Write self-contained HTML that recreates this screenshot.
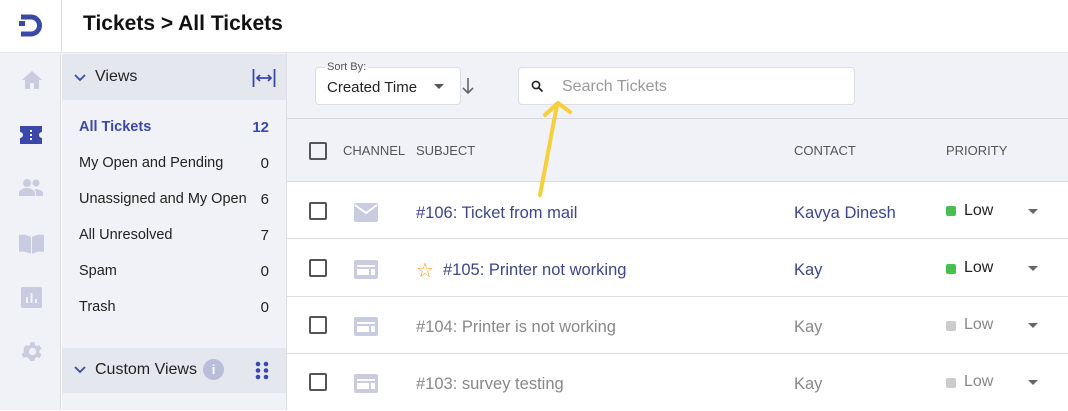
<!DOCTYPE html><html><head><style>
*{box-sizing:border-box;margin:0;padding:0}
body{width:1068px;height:410px;overflow:hidden;font-family:"Liberation Sans",sans-serif;background:#fff;position:relative;color:#222}
.a{position:absolute}
.rail{left:0;top:53px;width:61px;height:357px;background:#f1f2f7;border-right:1px solid #dcdde5}
.views{left:62px;top:53px;width:225px;height:357px;background:#f1f2f7;border-right:1px solid #dcdde5}
.vh{left:62px;top:54px;width:224px;height:46px;background:#e5e7ef}
.item{left:79px;font-size:14.5px;color:#222}
.cnt{left:250px;width:19px;text-align:right;font-size:15px;color:#222}
.tb{left:287px;top:53px;width:781px;height:66px;background:#f1f2f7;border-bottom:1px solid #d6d8e2}
.th{left:287px;top:119px;width:781px;height:63px;background:#f1f2f7;border-bottom:1px solid #d6d8e2}
.hd{font-size:13px;color:#555;top:143px}
.row{left:287px;width:781px;height:57px;border-bottom:1px solid #dedee3}
.cb{width:18px;height:18px;border:2px solid #555;border-radius:2px;left:309px}
.subj{left:416px;font-size:16.5px;color:#3d4787}
.grey{color:#888}
.dot{width:10px;height:10px;left:946px;border-radius:2px}
.low{left:964px;font-size:16px}
.car{left:1028px;width:0;height:0;border-left:5px solid transparent;border-right:5px solid transparent;border-top:5px solid #666}
</style></head><body>
<div class="a" style="left:0;top:0;width:1068px;height:53px;border-bottom:1px solid #e4e4ea"></div>
<div class="a" style="left:61px;top:0;width:1px;height:53px;background:#dcdde5"></div>
<svg class="a" style="left:18px;top:13px" width="26" height="26" viewBox="0 0 26 26"><path d="M3 4h10a8 8 0 0 1 0 17H3" fill="none" stroke="#3c48a8" stroke-width="5"/><rect x="1" y="8" width="6" height="5" fill="#3c48a8"/></svg>
<div class="a" style="left:83px;top:12px;font-size:21px;font-weight:bold;color:#111">Tickets &gt; All Tickets</div>
<div class="a rail"></div>
<svg class="a" style="left:21px;top:70px" width="22" height="20"><path d="M11 1L1 10h3v9h5v-6h4v6h5v-9h3z" fill="#c9cbe0"/></svg>
<svg class="a" style="left:20px;top:126px" width="22" height="18"><path d="M0 0h22v6a3 3 0 0 0 0 6v6H0v-6a3 3 0 0 0 0-6z" fill="#3c48a8"/><rect x="10" y="4" width="2" height="2" fill="#fff"/><rect x="10" y="8" width="2" height="2" fill="#fff"/><rect x="10" y="12" width="2" height="2" fill="#fff"/></svg>
<svg class="a" style="left:19px;top:178px" width="24" height="18"><circle cx="8" cy="5" r="4" fill="#c9cbe0"/><circle cx="17" cy="5" r="3.5" fill="#c9cbe0"/><path d="M0 18v-3c0-3 5-5 8-5s8 2 8 5v3zM17 18v-3c0-2-1-3-2-4 3 0 9 1 9 4v3z" fill="#c9cbe0"/></svg>
<svg class="a" style="left:19px;top:232px" width="25" height="22"><path d="M0 3c4-1 8 0 12 2v17c-4-2-8-3-12-2zM13 5c4-2 8-3 12-2v17c-4-1-8 0-12 2z" fill="#c9cbe0"/></svg>
<svg class="a" style="left:21px;top:287px" width="21" height="21"><rect width="21" height="21" rx="2" fill="#c9cbe0"/><rect x="5" y="10" width="2" height="6" fill="#f1f2f7"/><rect x="9.5" y="6" width="2" height="10" fill="#f1f2f7"/><rect x="14" y="12" width="2" height="4" fill="#f1f2f7"/></svg>
<svg class="a" style="left:19px;top:339px" width="25" height="25" viewBox="0 0 24 24"><path d="M19.4 13a7.5 7.5 0 0 0 0-2l2.1-1.6-2-3.5-2.5 1a7 7 0 0 0-1.7-1L15 3h-4l-.4 2.7a7 7 0 0 0-1.7 1l-2.5-1-2 3.5L4.6 11a7.5 7.5 0 0 0 0 2l-2.1 1.6 2 3.5 2.5-1a7 7 0 0 0 1.7 1L11 21h4l.4-2.7a7 7 0 0 0 1.7-1l2.5 1 2-3.5zM13 15.5a3.5 3.5 0 1 1 0-7 3.5 3.5 0 0 1 0 7z" fill="#c9cbe0"/></svg>
<div class="a views"></div>
<div class="a vh"></div>
<svg class="a" style="left:74px;top:74px" width="12" height="8"><path d="M1 1l5 5 5-5" fill="none" stroke="#3c48a8" stroke-width="1.8"/></svg>
<div class="a" style="left:95px;top:68px;font-size:16px;color:#222">Views</div>
<svg class="a" style="left:252px;top:68px" width="24" height="20"><path d="M1.5 1v18M22.5 1v18M5 10h14M8 7l-3 3 3 3M16 7l3 3-3 3" fill="none" stroke="#3c48a8" stroke-width="1.8"/></svg>
<div class="a item" style="top:119px;color:#3c48a8;font-weight:bold">All Tickets</div><div class="a cnt" style="top:119px;color:#3c48a8;font-weight:bold">12</div>
<div class="a item" style="top:155px">My Open and Pending</div><div class="a cnt" style="top:155px">0</div>
<div class="a item" style="top:191px">Unassigned and My Open</div><div class="a cnt" style="top:191px">6</div>
<div class="a item" style="top:227px">All Unresolved</div><div class="a cnt" style="top:227px">7</div>
<div class="a item" style="top:263px">Spam</div><div class="a cnt" style="top:263px">0</div>
<div class="a item" style="top:299px">Trash</div><div class="a cnt" style="top:299px">0</div>
<div class="a" style="left:62px;top:348px;width:224px;height:45px;background:#e5e7ef"></div>
<svg class="a" style="left:74px;top:366px" width="12" height="8"><path d="M1 1l5 5 5-5" fill="none" stroke="#3c48a8" stroke-width="1.8"/></svg>
<div class="a" style="left:95px;top:361px;font-size:16px;color:#222">Custom Views</div>
<div class="a" style="left:203px;top:359px;width:21px;height:21px;border-radius:50%;background:#b9bdd9;color:#fff;font-size:13px;text-align:center;line-height:21px;font-weight:bold">i</div>
<svg class="a" style="left:255px;top:361px" width="14" height="19"><g fill="#3c48a8"><circle cx="3" cy="3" r="2.3"/><circle cx="11" cy="3" r="2.3"/><circle cx="3" cy="9.5" r="2.3"/><circle cx="11" cy="9.5" r="2.3"/><circle cx="3" cy="16" r="2.3"/><circle cx="11" cy="16" r="2.3"/></g></svg>
<div class="a tb"></div>
<div class="a" style="left:315px;top:67px;width:146px;height:38px;background:#fff;border:1px solid #dcdde5;border-radius:4px"></div>
<div class="a" style="left:325px;top:61px;font-size:11px;color:#555;background:linear-gradient(#f1f2f7 50%,#fff 50%);padding:0 2px">Sort By:</div>
<div class="a" style="left:327px;top:79px;font-size:15px;color:#222">Created Time</div>
<div class="a car" style="left:434px;top:84px;border-top-color:#555"></div>
<svg class="a" style="left:462px;top:77px" width="12" height="18"><path d="M6 1v15M1 11l5 5 5-5" fill="none" stroke="#666" stroke-width="1.6"/></svg>
<div class="a" style="left:518px;top:67px;width:337px;height:38px;background:#fff;border:1px solid #dcdde5;border-radius:4px"></div>
<svg class="a" style="left:531px;top:80px" width="13" height="13"><circle cx="5" cy="5" r="3.6" fill="none" stroke="#222" stroke-width="1.6"/><path d="M7.5 7.5L11.5 11.5" stroke="#222" stroke-width="1.8"/></svg>
<div class="a" style="left:562px;top:78px;font-size:16px;color:#999">Search Tickets</div>
<div class="a th"></div>
<div class="a cb" style="top:142px"></div>
<div class="a hd" style="left:343px">CHANNEL</div>
<div class="a hd" style="left:416px">SUBJECT</div>
<div class="a hd" style="left:794px">CONTACT</div>
<div class="a hd" style="left:946px">PRIORITY</div>
<div class="a row" style="top:182px"></div>
<div class="a row" style="top:240px"></div>
<div class="a row" style="top:297px"></div>
<div class="a row" style="top:354px;border:none"></div>
<div class="a cb" style="top:202px"></div><div class="a cb" style="top:259px"></div><div class="a cb" style="top:316px"></div><div class="a cb" style="top:373px"></div>
<svg class="a" style="left:354px;top:203px" width="24" height="19"><rect width="24" height="19" rx="2" fill="#c9cbe0"/><path d="M1 2l11 8 11-8" fill="none" stroke="#fff" stroke-width="2"/></svg>
<svg class="a" style="left:354px;top:260px" width="24" height="19"><rect width="24" height="19" rx="2" fill="#c9cbe0"/><rect x="3" y="5" width="18" height="2" fill="#fff"/><rect x="3" y="9" width="12" height="6" fill="#fff"/><rect x="17" y="9" width="4" height="6" fill="#fff"/></svg>
<svg class="a" style="left:354px;top:317px" width="24" height="19"><rect width="24" height="19" rx="2" fill="#c9cbe0"/><rect x="3" y="5" width="18" height="2" fill="#fff"/><rect x="3" y="9" width="12" height="6" fill="#fff"/><rect x="17" y="9" width="4" height="6" fill="#fff"/></svg>
<svg class="a" style="left:354px;top:374px" width="24" height="19"><rect width="24" height="19" rx="2" fill="#c9cbe0"/><rect x="3" y="5" width="18" height="2" fill="#fff"/><rect x="3" y="9" width="12" height="6" fill="#fff"/><rect x="17" y="9" width="4" height="6" fill="#fff"/></svg>
<div class="a subj" style="top:204px">#106: Ticket from mail</div>
<div class="a" style="left:416px;top:258px;font-size:20px;color:#f0a020">&#9734;</div>
<div class="a subj" style="left:443px;top:261px">#105: Printer not working</div>
<div class="a subj grey" style="top:318px">#104: Printer is not working</div>
<div class="a subj grey" style="top:375px">#103: survey testing</div>
<div class="a subj" style="left:794px;top:204px">Kavya Dinesh</div>
<div class="a subj" style="left:794px;top:261px">Kay</div>
<div class="a subj grey" style="left:794px;top:318px">Kay</div>
<div class="a subj grey" style="left:794px;top:375px">Kay</div>
<div class="a dot" style="top:206px;background:#4bbf4b"></div><div class="a low" style="top:202px">Low</div>
<div class="a dot" style="top:264px;background:#4bbf4b"></div><div class="a low" style="top:259px">Low</div>
<div class="a dot" style="top:321px;background:#ccc"></div><div class="a low grey" style="top:316px">Low</div>
<div class="a dot" style="top:378px;background:#ccc"></div><div class="a low grey" style="top:373px">Low</div>
<div class="a car" style="top:209px"></div><div class="a car" style="top:266px"></div><div class="a car" style="top:323px"></div><div class="a car" style="top:380px"></div>
<svg class="a" style="left:530px;top:95px" width="50" height="105"><path d="M10 100L27 10M15 20L28 8L40 17" fill="none" stroke="#f7cf3a" stroke-width="4" stroke-linecap="round" stroke-linejoin="round"/></svg>
</body></html>
